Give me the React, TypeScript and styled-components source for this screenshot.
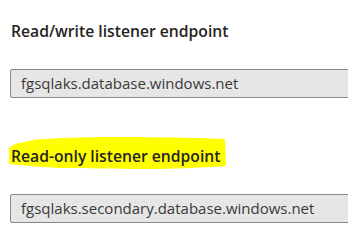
import React from "react";
import styled, { createGlobalStyle } from "styled-components";

const GlobalStyle = createGlobalStyle`
  html, body {
    margin: 0;
    padding: 0;
    background: #ffffff;
    overflow: hidden;
  }
  body {
    font-family: "Open Sans", "Noto Sans", sans-serif;
  }
`;

const Page = styled.div`
  width: 348px;
  height: 229px;
  padding: 21px 0 0 10px;
  box-sizing: border-box;
  display: flex;
  flex-direction: column;
  overflow: hidden;
`;

const Field = styled.div`
  display: flex;
  flex-direction: column;
  gap: 28px;
  margin-bottom: 48px;
`;

const Label = styled.div`
  position: relative;
  z-index: 0;
  font-size: 15.7px;
  font-weight: 600;
  color: #252423;
  line-height: 20px;
  height: 20px;
  padding-left: 1px;
  align-self: flex-start;
  white-space: nowrap;
`;

// yellow marker stroke behind the second heading
const Marker = styled.svg`
  position: absolute;
  left: -3px;
  top: -10px;
  width: 222px;
  height: 34px;
  z-index: -1;
`;

const InputBox = styled.div`
  width: 360px;
  height: 29px;
  box-sizing: border-box;
  border: 1px solid #8a8886;
  border-radius: 2px;
  background: #e6e6e6;
  color: #3b3a39;
  font-size: 15px;
  line-height: 27px;
  padding-left: 10px;
  white-space: nowrap;
`;

export default function App() {
  return (
    <>
      <GlobalStyle />
      <Page>
        <Field>
          <Label>Read/write listener endpoint</Label>
          <InputBox>fgsqlaks.database.windows.net</InputBox>
        </Field>
        <Field>
          <Label>
            <Marker viewBox="0 0 222 34">
              <path
                d="M2 12 C6 9 9 7 13 7 C22 5 30 3 38 3 C70 1 100 1 113 1 C150 1 175 2 193 2 L218 3 L219 30 C190 32 165 33 143 33 C110 33 80 32 53 32 C30 31 15 29 2 28 Z"
                fill="#ffff00"
              />
            </Marker>
            Read-only listener endpoint
          </Label>
          <InputBox>fgsqlaks.secondary.database.windows.net</InputBox>
        </Field>
      </Page>
    </>
  );
}
